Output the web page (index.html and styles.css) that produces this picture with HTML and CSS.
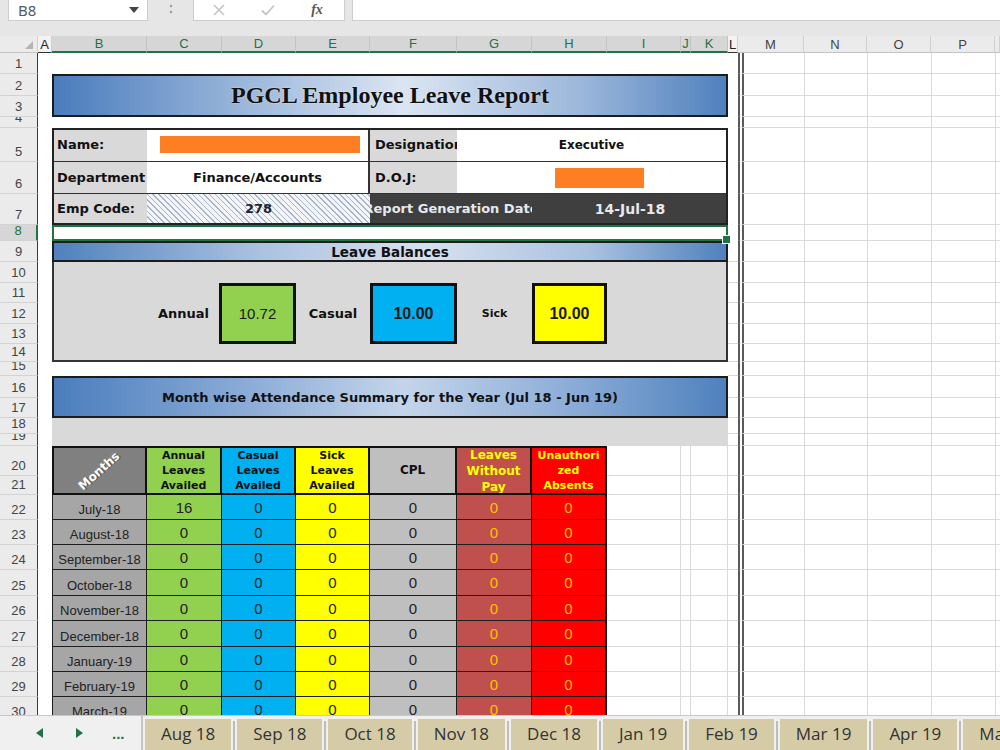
FILE: index.html
```html
<!DOCTYPE html>
<html>
<head>
<meta charset="utf-8">
<link rel="stylesheet" href="styles.css">
</head>
<body>
<div class="app">
  <div class="fbar">
    <div class="namebox"><span class="ref">B8</span><svg width="10" height="6" viewBox="0 0 10 6"><path d="M0 0h10L5 6z" fill="#444"/></svg></div>
    <div class="vdots"><svg width="4" height="14" viewBox="0 0 4 14"><circle cx="2" cy="3" r="1.2" fill="#999"/><circle cx="2" cy="9" r="1.2" fill="#999"/></svg></div>
    <div class="fbtns">
      <svg width="14" height="14" viewBox="0 0 14 14"><path d="M2 2L12 12M12 2L2 12" stroke="#c4c4c4" stroke-width="1.6"/></svg>
      <svg width="14" height="14" viewBox="0 0 14 14"><path d="M1 7.5L5 11.5L13 2.5" stroke="#c4c4c4" stroke-width="1.8" fill="none"/></svg>
      <span class="fx">fx</span>
    </div>
    <div class="finput"></div>
  </div>

  <div class="sheet">
    <div class="ch corner"><svg width="8" height="8" viewBox="0 0 8 8"><path d="M8 0V8H0z" fill="#b5b5b5"/></svg></div>
    <div class="ch frm">A</div>
    <div class="ch sel">B</div>
    <div class="ch sel">C</div>
    <div class="ch sel">D</div>
    <div class="ch sel">E</div>
    <div class="ch sel">F</div>
    <div class="ch sel">G</div>
    <div class="ch sel">H</div>
    <div class="ch sel">I</div>
    <div class="ch sel">J</div>
    <div class="ch sel">K</div>
    <div class="ch frm">L</div>
    <div class="ch">M</div>
    <div class="ch">N</div>
    <div class="ch">O</div>
    <div class="ch">P</div>
    <div class="ch"></div>

    <div class="bar title">PGCL Employee Leave Report</div>

    <div class="info">
      <div class="lab">Name:</div>
      <div class="val vl"><span class="redact r1"></span></div>
      <div class="lab">Designation</div>
      <div class="val span2">Executive</div>
      <div class="lab">Department</div>
      <div class="val vl">Finance/Accounts</div>
      <div class="lab">D.O.J:</div>
      <div class="val span2 left"><span class="redact r2"></span></div>
      <div class="lab last">Emp Code:</div>
      <div class="val hatch last">278</div>
      <div class="dark rgd last"><span>Report Generation Date</span></div>
      <div class="dark last">14-Jul-18</div>
    </div>

    <div class="sel8"></div>

    <div class="bar lbbar">Leave Balances</div>
    <div class="gbox"></div>
    <div class="bl a">Annual</div>
    <div class="bb g">10.72</div>
    <div class="bl c">Casual</div>
    <div class="bb b">10.00</div>
    <div class="bl s">Sick</div>
    <div class="bb y">10.00</div>

    <div class="bar mwbar">Month wise Attendance Summary for the Year (Jul 18 - Jun 19)</div>
    <div class="gstrip"></div>

    <div class="tbl">
      <div class="th mh"><span>Months</span></div>
      <div class="th c-an">Annual Leaves Availed</div>
      <div class="th c-ca">Casual Leaves Availed</div>
      <div class="th c-si">Sick Leaves Availed</div>
      <div class="th c-cp cpl">CPL</div>
      <div class="th c-lw yl big">Leaves Without Pay</div>
      <div class="th c-un yl wrap">Unauthorized Absents</div>

      <div class="td m">July-18</div><div class="td c-an">16</div><div class="td c-ca">0</div><div class="td c-si">0</div><div class="td c-cp">0</div><div class="td c-lw">0</div><div class="td c-un">0</div>
      <div class="td m">August-18</div><div class="td c-an">0</div><div class="td c-ca">0</div><div class="td c-si">0</div><div class="td c-cp">0</div><div class="td c-lw">0</div><div class="td c-un">0</div>
      <div class="td m">September-18</div><div class="td c-an">0</div><div class="td c-ca">0</div><div class="td c-si">0</div><div class="td c-cp">0</div><div class="td c-lw">0</div><div class="td c-un">0</div>
      <div class="td m">October-18</div><div class="td c-an">0</div><div class="td c-ca">0</div><div class="td c-si">0</div><div class="td c-cp">0</div><div class="td c-lw">0</div><div class="td c-un">0</div>
      <div class="td m">November-18</div><div class="td c-an">0</div><div class="td c-ca">0</div><div class="td c-si">0</div><div class="td c-cp">0</div><div class="td c-lw">0</div><div class="td c-un">0</div>
      <div class="td m">December-18</div><div class="td c-an">0</div><div class="td c-ca">0</div><div class="td c-si">0</div><div class="td c-cp">0</div><div class="td c-lw">0</div><div class="td c-un">0</div>
      <div class="td m">January-19</div><div class="td c-an">0</div><div class="td c-ca">0</div><div class="td c-si">0</div><div class="td c-cp">0</div><div class="td c-lw">0</div><div class="td c-un">0</div>
      <div class="td m">February-19</div><div class="td c-an">0</div><div class="td c-ca">0</div><div class="td c-si">0</div><div class="td c-cp">0</div><div class="td c-lw">0</div><div class="td c-un">0</div>
      <div class="td m">March-19</div><div class="td c-an">0</div><div class="td c-ca">0</div><div class="td c-si">0</div><div class="td c-cp">0</div><div class="td c-lw">0</div><div class="td c-un">0</div>
    </div>

    <div class="rh">1</div><div class="gr"></div>
    <div class="rh">2</div><div class="gr"></div>
    <div class="rh">3</div><div class="gr"></div>
    <div class="rh">4</div><div class="gr"></div>
    <div class="rh">5</div><div class="gr"></div>
    <div class="rh">6</div><div class="gr"></div>
    <div class="rh">7</div><div class="gr"></div>
    <div class="rh on">8</div><div class="gr"></div>
    <div class="rh">9</div><div class="lc"></div><div class="gr"></div>
    <div class="rh">10</div><div class="lc"></div><div class="gr"></div>
    <div class="rh">11</div><div class="lc"></div><div class="gr"></div>
    <div class="rh">12</div><div class="lc"></div><div class="gr"></div>
    <div class="rh">13</div><div class="lc"></div><div class="gr"></div>
    <div class="rh">14</div><div class="lc"></div><div class="gr"></div>
    <div class="rh">15</div><div class="lc"></div><div class="gr"></div>
    <div class="rh">16</div><div class="lc"></div><div class="gr"></div>
    <div class="rh">17</div><div class="lc"></div><div class="gr"></div>
    <div class="rh">18</div><div class="lc"></div><div class="gr"></div>
    <div class="rh">19</div><div class="lc"></div><div class="gr"></div>
    <div class="rh">20</div><div class="il"></div><div class="gr"></div>
    <div class="rh">21</div><div class="il"></div><div class="gr"></div>
    <div class="rh">22</div><div class="il"></div><div class="gr"></div>
    <div class="rh">23</div><div class="il"></div><div class="gr"></div>
    <div class="rh">24</div><div class="il"></div><div class="gr"></div>
    <div class="rh">25</div><div class="il"></div><div class="gr"></div>
    <div class="rh">26</div><div class="il"></div><div class="gr"></div>
    <div class="rh">27</div><div class="il"></div><div class="gr"></div>
    <div class="rh">28</div><div class="il"></div><div class="gr"></div>
    <div class="rh">29</div><div class="il"></div><div class="gr"></div>
    <div class="rh">30</div><div class="il"></div><div class="gr"></div>
  </div>

  <div class="tabs">
    <div class="nav">
      <svg width="7" height="10" viewBox="0 0 7 10"><path d="M7 0V10L0 5z" fill="#217346"/></svg>
      <svg width="7" height="10" viewBox="0 0 7 10"><path d="M0 0V10L7 5z" fill="#217346"/></svg>
      <span class="more">...</span>
    </div>
    <div class="tab">Aug 18</div>
    <div class="tab">Sep 18</div>
    <div class="tab">Oct 18</div>
    <div class="tab">Nov 18</div>
    <div class="tab">Dec 18</div>
    <div class="tab">Jan 19</div>
    <div class="tab">Feb 19</div>
    <div class="tab">Mar 19</div>
    <div class="tab">Apr 19</div>
    <div class="tab">May 19</div>
  </div>
</div>
</body>
</html>
```

FILE: styles.css
```css
* { box-sizing: border-box; }
html, body { margin: 0; padding: 0; }
body {
  width: 1000px;
  height: 750px;
  overflow: hidden;
  background: #e6e6e6;
  font-family: "Liberation Sans", Arial, sans-serif;
}
.app { display: flex; flex-direction: column; height: 750px; }

/* formula bar */
.fbar {
  height: 36px;
  flex: none;
  display: flex;
  align-items: flex-start;
  background: #e6e6e6;
}
.namebox {
  margin-left: 8px;
  width: 140px;
  height: 21px;
  background: #fff;
  border: 1px solid #cdcdcd;
  border-top: none;
  display: flex;
  align-items: center;
  justify-content: space-between;
  padding: 0 8px 0 9px;
}
.namebox .ref { font: 15px "Noto Sans", sans-serif; color: #4f5b6b; }
.vdots { width: 45px; display: flex; justify-content: center; padding-top: 3px; }
.fbtns {
  width: 152px;
  height: 21px;
  background: #fff;
  border: 1px solid #cdcdcd;
  border-top: none;
  display: flex;
  align-items: center;
  justify-content: space-around;
}
.fx { font: italic bold 14px "Liberation Serif", serif; color: #555; width: 15px; }
.finput {
  margin-left: 7px;
  flex: 1;
  height: 21px;
  background: #fff;
  border: 1px solid #cdcdcd;
  border-top: none;
  border-right: none;
}

/* sheet grid */
.sheet {
  flex: none;
  height: 679px;
  overflow: hidden;
  background: #fff;
  display: grid;
  grid-template-columns: 38px 14px 95px 75px 74px 74px 87px 75px 75px 74px 10px 37px 10px 66px 63px 64px 64px 1fr;
  grid-template-rows: 17px 21px 22px 21px 11px 34px 32px 31px 16px 21px 21px 20px 21px 20px 18px 14px 22px 20px 16px 12px 30px 19px 25px 25px 25px 26px 25px 26px 25px 25px 25px;
}
.ch {
  background: #ebebeb;
  border-right: 1px solid #d0d0d0;
  border-bottom: 1px solid #c2c2c2;
  display: flex;
  align-items: center;
  justify-content: center;
  font: 13px "Liberation Sans", Arial, sans-serif;
  color: #444;
}
.ch.corner { justify-content: flex-end; align-items: flex-end; padding: 0 4px 3px 0; border-bottom: 1px solid #c2c2c2; }
.ch.sel { background: #d6d6d6; color: #217346; border-bottom: 2px solid #217346; border-right-color: #c4c4c4; }
.ch.frm { background: #f3f3f3; color: #222; border-bottom: 1px solid #333; }

.rh {
  grid-column: 1;
  background: #ebebeb;
  border-right: 1px solid #3a3a3a;
  border-bottom: 1px solid #d2d2d2;
  display: flex;
  align-items: flex-end;
  justify-content: center;
  overflow: hidden;
  font: 13px/15px "Liberation Sans", Arial, sans-serif;
  color: #444;
  padding-bottom: 2px;
}
.rh.on { background: #d6d6d6; color: #217346; border-right: 2px solid #217346; }

.gr {
  grid-column: 14 / -1;
  border-left: 6px double #5a5a5a;
  border-bottom: 1px solid #dadada;
  background:
    linear-gradient(#dadada, #dadada) 60px 0 / 1px 100% no-repeat,
    linear-gradient(#dadada, #dadada) 123px 0 / 1px 100% no-repeat,
    linear-gradient(#dadada, #dadada) 187px 0 / 1px 100% no-repeat,
    linear-gradient(#dadada, #dadada) 251px 0 / 1px 100% no-repeat;
}
.lc { grid-column: 13; border-bottom: 1px solid #dadada; }
.il {
  grid-column: 10 / 14;
  border-bottom: 1px solid #dadada;
  background:
    linear-gradient(#dadada, #dadada) 73px 0 / 1px 100% no-repeat,
    linear-gradient(#dadada, #dadada) 83px 0 / 1px 100% no-repeat,
    linear-gradient(#dadada, #dadada) 120px 0 / 1px 100% no-repeat;
}

/* banners */
.bar {
  grid-column: 3 / 13;
  border: 2px solid #1c1c1c;
  display: flex;
  align-items: center;
  justify-content: center;
  font: bold 13px "DejaVu Sans", sans-serif;
  color: #111;
  white-space: nowrap;
}
.title {
  grid-row: 3 / 5;
  font: bold 24px "Liberation Serif", serif;
  color: #111;
  text-shadow: 0 0 2px rgba(255,255,255,0.7);
  background: linear-gradient(90deg, #4a7cbd 0%, #9ab6da 28%, #dbe5f2 52%, #9db8db 78%, #4f81bd 100%);
}
.lbbar {
  grid-row: 10 / 11;
  font-size: 13.5px;
  background: linear-gradient(90deg, #4f81bd 0%, #a9c1e0 30%, #d6e1ef 55%, #a9c1e0 80%, #4f81bd 100%);
}
.mwbar {
  grid-row: 17 / 19;
  background: linear-gradient(90deg, #4b7dbd 0%, #8eaed8 30%, #c4d5ea 52%, #8eaed8 76%, #4f81bd 100%);
}

/* info block */
.info {
  grid-row: 6 / 9;
  grid-column: 3 / 13;
  display: grid;
  grid-template-columns: 95px 223px 87px 75px 196px;
  grid-template-rows: 34px 32px 31px;
  outline: 2px solid #222;
  outline-offset: -2px;
  background: #fff;
}
.lab {
  background: #d9d9d9;
  font: bold 13px "DejaVu Sans", sans-serif;
  color: #111;
  padding-left: 5px;
  display: flex;
  align-items: center;
  white-space: nowrap;
  overflow: hidden;
  border-bottom: 1px solid #333;
}
.val {
  display: flex;
  align-items: center;
  justify-content: center;
  font: bold 13px "DejaVu Sans", sans-serif;
  color: #111;
  border-bottom: 1px solid #333;
}
.val.vl { border-right: 2px solid #333; justify-content: flex-start; }
.val.vl:nth-child(6) { justify-content: center; }
.val.span2 { grid-column: span 2; font-size: 12px; border-right: 2px solid #222; }
.val.left { justify-content: flex-start; }
.redact { display: block; background: #fe7e24; }
.r1 { margin-left: 13px; width: 200px; height: 17px; }
.r2 { margin-left: 98px; width: 89px; height: 20px; }
.hatch {
  background: repeating-linear-gradient(45deg, #a6b3c9 0 1px, #f3f5f9 1px 4px);
  color: #1b2433;
}
.last { border-bottom: 2px solid #222; }
.dark {
  background: #3f3f3f;
  color: #e6e8ee;
  font: bold 14px "DejaVu Sans", sans-serif;
  display: flex;
  align-items: center;
  justify-content: center;
  white-space: nowrap;
  overflow: hidden;
}
.dark.rgd { grid-column: span 2; font-size: 13px; }

.sel8 {
  grid-row: 9 / 10;
  grid-column: 3 / 13;
  border: 2px solid #217346;
  position: relative;
}
.sel8::after {
  content: "";
  position: absolute;
  right: -5px;
  bottom: -5px;
  width: 7px;
  height: 7px;
  background: #217346;
  border: 1px solid #fff;
}

/* leave balances */
.gbox {
  grid-row: 11 / 16;
  grid-column: 3 / 13;
  background: #d9d9d9;
  border: 2px solid #333;
  border-top: none;
}
.bl {
  grid-row: 13 / 14;
  display: flex;
  align-items: center;
  justify-content: center;
  font: bold 13px "DejaVu Sans", sans-serif;
  color: #111;
  white-space: nowrap;
}
.bl.a { grid-column: 4; justify-content: flex-end; padding-right: 13px; }
.bl.c { grid-column: 6; }
.bl.s { grid-column: 8; font-size: 11px; }
.bb {
  grid-row: 12 / 15;
  border: 3px solid #111;
  display: flex;
  align-items: center;
  justify-content: center;
  font: 15px "Liberation Sans", Arial, sans-serif;
  color: #1a1a1a;
}
.bb.g { grid-column: 5; background: #92d050; margin-left: -3px; }
.bb.b { grid-column: 7; background: #00b0f0; font: bold 16px "Liberation Sans", Arial, sans-serif; }
.bb.y { grid-column: 9; background: #ffff00; font: bold 16px "Liberation Sans", Arial, sans-serif; }

.gstrip { grid-row: 19 / 21; grid-column: 3 / 13; background: #d9d9d9; }

/* attendance table */
.tbl {
  grid-row: 21 / 32;
  grid-column: 3 / 10;
  display: grid;
  grid-template-columns: 95px 75px 74px 74px 87px 75px 75px;
  grid-template-rows: 49px 25px 25px 25px 26px 25px 26px 25px 25px 25px;
}
.th {
  border-top: 2px solid #111;
  border-bottom: 2px solid #111;
  border-right: 2px solid #111;
  display: flex;
  align-items: center;
  justify-content: center;
  text-align: center;
  font: bold 11px/15px "DejaVu Sans", sans-serif;
  color: #111;
  overflow: hidden;
  padding: 0 4px;
}
.th.mh { border-left: 2px solid #111; background: #808080; }
.th.mh span {
  display: block;
  transform: rotate(-42deg);
  color: #fff;
  font: bold 12px "DejaVu Sans", sans-serif;
  text-shadow: 1px 1px 0 #555, 0 0 2px #9aa;
}
.th.cpl { font-size: 12px; }
.th.yl { color: #ffff00; }
.th.big { font-size: 12px; line-height: 16px; }
.th.wrap { overflow-wrap: anywhere; padding: 0 5px; }

.td {
  border-right: 1px solid #1e1e1e;
  border-bottom: 1px solid #1e1e1e;
  display: flex;
  align-items: center;
  justify-content: center;
  font: 15px "Liberation Sans", Arial, sans-serif;
  color: #222;
}
.td.m {
  border-left: 1px solid #1e1e1e;
  background: #a6a6a6;
  font-size: 13px;
  align-items: flex-end;
  padding-bottom: 2px;
}
.c-an { background: #92d050; }
.c-ca { background: #00b0f0; }
.c-si { background: #ffff00; }
.c-cp { background: #bfbfbf; }
.c-lw { background: #c0504d; }
.c-un { background: #ff0000; }
.td.c-lw, .td.c-un { color: #ffc000; }
.td.c-un { border-right: 2px solid #111; }

/* sheet tabs */
.tabs {
  height: 35px;
  flex: none;
  background: #f0f0f0;
  border-top: 1px solid #c8c8c8;
  display: flex;
  align-items: flex-end;
  overflow: hidden;
}
.nav {
  width: 143px;
  height: 100%;
  flex: none;
  display: flex;
  align-items: center;
  padding-left: 36px;
  gap: 33px;
  border-right: 2px solid #c4c4c4;
  margin-right: 2px;
}
.more { font: bold 15px "Liberation Sans", Arial, sans-serif; color: #217346; margin-left: -4px; }
.tab {
  flex: none;
  height: 31px;
  padding: 0 16px 2px;
  margin-right: 6px;
  background: #d5cca7;
  display: flex;
  align-items: center;
  font: 17px "Open Sans", sans-serif;
  color: #333;
  position: relative;
  white-space: nowrap;
}
.tab::after {
  content: "";
  position: absolute;
  right: -4px;
  top: 2px;
  bottom: 0;
  width: 2px;
  background: #bdbdbd;
}
```
